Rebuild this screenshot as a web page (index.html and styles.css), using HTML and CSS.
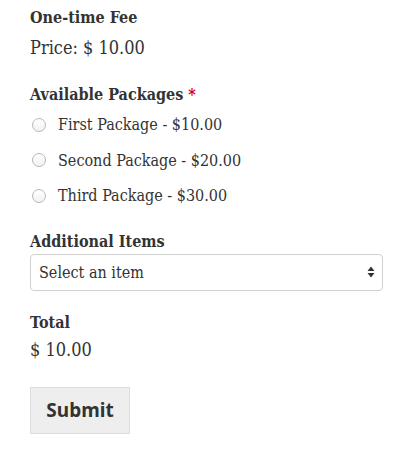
FILE: index.html
```html
<!DOCTYPE html>
<html lang="en">
<head>
<meta charset="utf-8">
<title>Form</title>
<link rel="stylesheet" href="styles.css">
</head>
<body>
<form class="form">
  <div class="field">
    <div class="label">One-time Fee</div>
    <div class="value">Price: $ 10.00</div>
  </div>
  <div class="field">
    <div class="label">Available Packages <span class="req">*</span></div>
    <ul class="choices">
      <li class="choice"><span class="radio"></span>First Package - $10.00</li>
      <li class="choice"><span class="radio"></span>Second Package - $20.00</li>
      <li class="choice"><span class="radio"></span>Third Package - $30.00</li>
    </ul>
  </div>
  <div class="field">
    <div class="label">Additional Items</div>
    <div class="select">
      <span>Select an item</span>
      <svg class="arrows" width="8" height="12" viewBox="0 0 8 12"><path d="M4 0.5 L7.5 5 L0.5 5 Z M4 11.5 L7.5 7 L0.5 7 Z" fill="#333"/></svg>
    </div>
  </div>
  <div class="field">
    <div class="label">Total</div>
    <div class="value">$ 10.00</div>
  </div>
  <button type="button" class="submit">Submit</button>
</form>
</body>
</html>
```
FILE: styles.css
```css
html, body {
  margin: 0;
  padding: 0;
  background: #fff;
}
.form {
  padding: 6px 29px 0 30px;
  font-family: "DejaVu Serif", "Liberation Serif", serif;
  font-stretch: condensed;
  color: #333;
}
.field {
  margin: 0;
}
.label {
  font-weight: bold;
  font-size: 16px;
  line-height: 20px;
}
.req {
  color: #d00;
}
.value {
  font-size: 18px;
  line-height: 28px;
}
.field:nth-child(1) .label {
  line-height: 24px;
  margin-bottom: 4px;
}
.field:nth-child(1) {
  margin-bottom: 23px;
}
.choices {
  list-style: none;
  margin: 1px 0 0;
  padding: 0;
}
.choice {
  display: flex;
  align-items: center;
  font-size: 16px;
  line-height: 25.5px;
  padding: 5px 0;
  position: relative;
  top: 1px;
}
.radio {
  width: 12px;
  height: 12px;
  border: 1px solid #b8b8b8;
  border-radius: 50%;
  background: linear-gradient(#fff, #f2f2f2);
  margin: 0 12px 0 2px;
  flex: none;
}
.field:nth-child(2) {
  margin-bottom: 19px;
}
.select {
  margin-top: 2px;
  display: flex;
  align-items: center;
  justify-content: space-between;
  border: 1px solid #d0d0d0;
  border-radius: 4px;
  font-size: 16px;
  line-height: 35px;
  padding: 0 7px 0 8px;
}
.arrows {
  display: block;
}
.field:nth-child(3) {
  margin-bottom: 22px;
}
.field:nth-child(4) .value {
  margin-top: 3px;
}
.submit {
  margin-top: 23px;
  width: 100px;
  height: 47px;
  background: #eee;
  border: 1px solid #ddd;
  border-radius: 0;
  font-family: "Noto Sans", sans-serif;
  font-weight: bold;
  font-size: 19px;
  color: #333;
  padding: 0;
}
```
